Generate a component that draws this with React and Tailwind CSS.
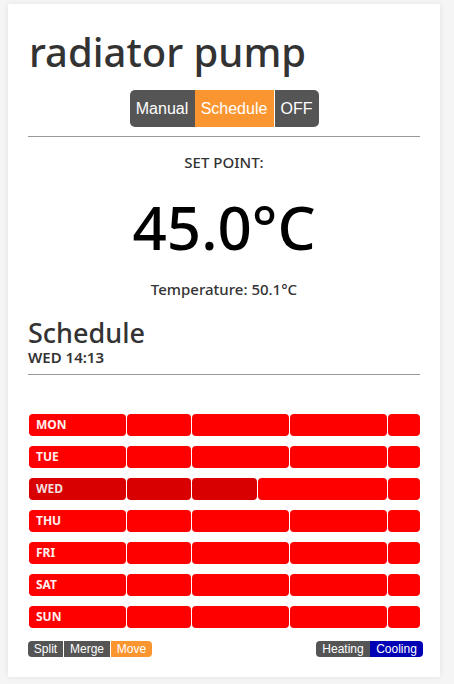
import React from "react";

const days = ["MON", "TUE", "WED", "THU", "FRI", "SAT", "SUN"];

function Row({ day }) {
  if (day === "WED") {
    return (
      <div className="flex gap-px h-[22px]">
        <div className="w-[97px] rounded-[4px] bg-[#d80000] text-[#f3dede] text-[12px] font-bold flex items-center pl-[7px]">{day}</div>
        <div className="w-[64px] rounded-[4px] bg-[#d80000]"></div>
        <div className="w-[65px] rounded-[4px] bg-[#d80000]"></div>
        <div className="flex-1 rounded-[4px] bg-[#ff0000]"></div>
        <div className="w-[32px] rounded-[4px] bg-[#ff0000]"></div>
      </div>
    );
  }
  return (
    <div className="flex gap-px h-[22px]">
      <div className="w-[97px] rounded-[4px] bg-[#ff0000] text-[#fff0f0] text-[12px] font-bold flex items-center pl-[7px]">{day}</div>
      <div className="w-[64px] rounded-[4px] bg-[#ff0000]"></div>
      <div className="w-[97px] rounded-[4px] bg-[#ff0000]"></div>
      <div className="flex-1 rounded-[4px] bg-[#ff0000]"></div>
      <div className="w-[32px] rounded-[4px] bg-[#ff0000]"></div>
    </div>
  );
}

export default function App() {
  return (
    <div className="bg-[#f5f5f5] min-h-[684px] pt-[4px] px-[8px] pb-[7px]" style={{ fontFamily: '"Noto Sans", sans-serif' }}>
      <div className="bg-white shadow-[0_0_6px_rgba(0,0,0,0.08)] px-[20px] pb-[20px] pt-[20px] w-[432px]">
        <h1 className="text-[40px] leading-[56px] text-[#333] font-medium ml-[1px]">radiator pump</h1>
        <div className="flex justify-center mt-[10px]">
          <div className="flex h-[37px] rounded-[5px] overflow-hidden text-[16px] text-white" style={{ fontFamily: '"Liberation Sans", Arial, sans-serif' }}>
            <div className="bg-[#555] w-[65px] flex items-center justify-center">Manual</div>
            <div className="bg-[#fb9530] w-[79px] flex items-center justify-center">Schedule</div>
            <div className="bg-[#555] w-[44px] ml-px flex items-center justify-center">OFF</div>
          </div>
        </div>
        <div className="h-px bg-[#999] mt-[9px]"></div>
        <div className="text-center text-[15px] font-medium text-[#333] mt-[15px] leading-[20px]">SET POINT:</div>
        <div className="text-center text-[60px] font-medium text-black leading-[80px] mt-[15px]">45.0°C</div>
        <div className="text-center text-[15px] font-medium text-[#333] leading-[20px] mt-[12px]">Temperature: 50.1°C</div>
        <div className="text-[27px] font-medium text-[#333] leading-[30px] mt-[19px]">Schedule</div>
        <div className="text-[15px] font-semibold text-[#333] leading-[18px]">WED 14:13</div>
        <div className="h-px bg-[#999] mt-[8px]"></div>
        <div className="flex flex-col gap-[10px] mt-[39px] pl-[1px]">
          {days.map((d) => (
            <Row key={d} day={d} />
          ))}
        </div>
        <div className="flex justify-between mt-[13px] text-[12px] text-white" style={{ fontFamily: '"Liberation Sans", Arial, sans-serif' }}>
          <div className="flex h-[16px] rounded-[4px] overflow-hidden">
            <div className="bg-[#555] w-[35px] flex items-center justify-center">Split</div>
            <div className="bg-[#555] w-[46px] ml-px flex items-center justify-center">Merge</div>
            <div className="bg-[#fb9530] w-[41px] ml-px flex items-center justify-center">Move</div>
          </div>
          <div className="flex h-[16px] rounded-[4px] overflow-hidden mr-[-3px]">
            <div className="bg-[#555] w-[54px] flex items-center justify-center">Heating</div>
            <div className="bg-[#0000b4] w-[53px] flex items-center justify-center">Cooling</div>
          </div>
        </div>
      </div>
    </div>
  );
}
